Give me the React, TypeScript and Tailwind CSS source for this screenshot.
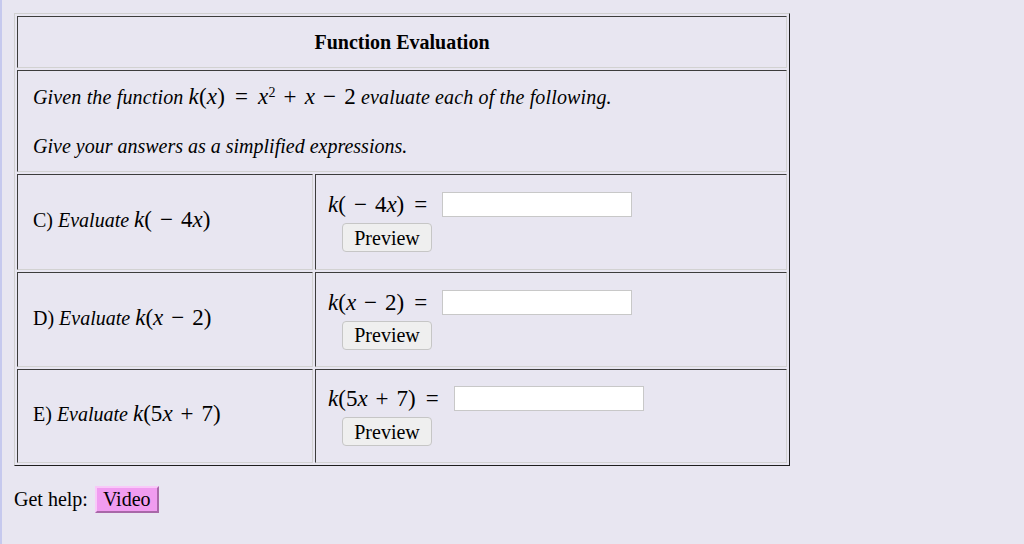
import React from "react";

const serif = "font-['Liberation_Serif','Times_New_Roman',serif]";

// Small helpers for the MathJax-looking expressions.
const V = ({ children }: { children: React.ReactNode }) => (
  <i className="font-normal italic">{children}</i>
);
const Bin = ({ children }: { children: React.ReactNode }) => (
  <span className="mx-[8px]">{children}</span>
);
const Rel = ({ children }: { children: React.ReactNode }) => (
  <span className="mx-[10px]">{children}</span>
);

type Part = {
  label: string;
  expr: React.ReactNode;
};

const parts: Part[] = [
  {
    label: "C)",
    expr: (
      <>
        <V>k</V>(<Bin>−</Bin>4<V>x</V>)
      </>
    ),
  },
  {
    label: "D)",
    expr: (
      <>
        <V>k</V>(<V>x</V>
        <Bin>−</Bin>2)
      </>
    ),
  },
  {
    label: "E)",
    expr: (
      <>
        <V>k</V>(5<V>x</V>
        <Bin>+</Bin>7)
      </>
    ),
  },
];

const cell =
  "border border-t-[#3c3c3c] border-l-[#3c3c3c] border-b-[#d2d2d2] border-r-[#d2d2d2]";

function PartRow({ part, height }: { part: Part; height: string }) {
  return (
    <tr className={height}>
      <td className={`${cell} w-[296px] pl-[15px] pb-[4px] align-middle leading-[24px]`}>
        {part.label} <i>Evaluate</i> <span className="text-[23px]">{part.expr}</span>
      </td>
      <td className={`${cell} pl-[12px] align-middle`}>
        <div className="flex h-[25px] items-center">
          <span className="text-[23px] leading-[25px]">
            {part.expr}
            <Rel>=</Rel>
          </span>
          <input
            type="text"
            className="ml-[5px] h-[25px] w-[190px] border border-[#c8c8c8] bg-white"
          />
        </div>
        <button className="mt-[6px] ml-[14px] block h-[29px] w-[90px] rounded-[4px] border border-[#c6c6c6] bg-[#efefef] text-[20px] leading-none text-black">
          Preview
        </button>
      </td>
    </tr>
  );
}

export default function App() {
  return (
    <div
      className={`${serif} min-h-[544px] border-l-2 border-[#c6c9ee] bg-[#e8e6f1] pl-[12px] pt-[13px] text-[20px] text-black`}
    >
      <table className="w-[776px] border-separate border-spacing-[2px] border border-t-[#d0d0d0] border-l-[#d0d0d0] border-b-[#1e1e1e] border-r-[#1e1e1e]">
        <tbody>
          <tr className="h-[52px]">
            <td colSpan={2} className={`${cell} text-center font-bold`}>
              Function Evaluation
            </td>
          </tr>
          <tr className="h-[102px]">
            <td colSpan={2} className={`${cell} pl-[15px]`}>
              <p className="leading-[28px] tracking-[0.15px]">
                <i>Given the function </i>
                <span className="text-[23px] leading-[28px]">
                  <V>k</V>(<V>x</V>)<Rel>=</Rel>
                  <V>x</V>
                  <sup className="text-[14px]">2</sup>
                  <Bin>+</Bin>
                  <V>x</V>
                  <Bin>−</Bin>2
                </span>
                <i> evaluate each of the following.</i>
              </p>
              <p className="mt-[21px] leading-[28px]">
                <i>Give your answers as a simplified expressions.</i>
              </p>
            </td>
          </tr>
          <PartRow part={parts[0]} height="h-[96px]" />
          <PartRow part={parts[1]} height="h-[95px]" />
          <PartRow part={parts[2]} height="h-[94px]" />
        </tbody>
      </table>
      <div className="mt-[18px] flex items-center">
        <span>Get help:</span>
        <button className="ml-[7px] h-[27px] border-2 border-t-[#f8c8f8] border-l-[#f8c8f8] border-b-[#a868a8] border-r-[#a868a8] bg-[#f09cf0] px-[6px] text-[20px] leading-none text-black">
          Video
        </button>
      </div>
    </div>
  );
}
